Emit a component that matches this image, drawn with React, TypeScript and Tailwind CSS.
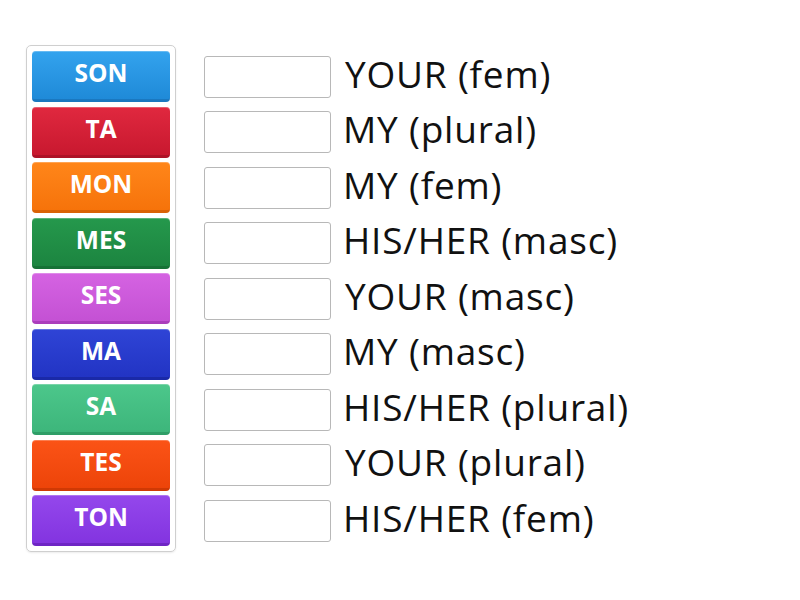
import React from "react";

const tiles = [
  { label: "SON", cls: "bg-gradient-to-b from-[#33a3ee] to-[#1f8ad8] border-b-[3px] border-[#1a78c0]" },
  { label: "TA", cls: "bg-gradient-to-b from-[#e0283f] to-[#c8182f] border-b-[3px] border-[#ad1227]" },
  { label: "MON", cls: "bg-gradient-to-b from-[#ff8619] to-[#f6730a] border-b-[3px] border-[#da6205]" },
  { label: "MES", cls: "bg-gradient-to-b from-[#25984c] to-[#1c8540] border-b-[3px] border-[#167236]" },
  { label: "SES", cls: "bg-gradient-to-b from-[#d563e2] to-[#c451d4] border-b-[3px] border-[#ab3dbc]" },
  { label: "MA", cls: "bg-gradient-to-b from-[#2f44d6] to-[#2234c4] border-b-[3px] border-[#1a29a8]" },
  { label: "SA", cls: "bg-gradient-to-b from-[#4cc78b] to-[#3db67b] border-b-[3px] border-[#2f9e67]" },
  { label: "TES", cls: "bg-gradient-to-b from-[#fb5316] to-[#ed4409] border-b-[3px] border-[#d03904]" },
  { label: "TON", cls: "bg-gradient-to-b from-[#9447ec] to-[#8334e0] border-b-[3px] border-[#6e25c4]" },
];

const prompts = [
  { text: "YOUR (fem)", cls: "ml-[14px]" },
  { text: "MY (plural)", cls: "ml-[12px]" },
  { text: "MY (fem)", cls: "ml-[12px]" },
  { text: "HIS/HER (masc)", cls: "ml-[12px]" },
  { text: "YOUR (masc)", cls: "ml-[14px]" },
  { text: "MY (masc)", cls: "ml-[12px]" },
  { text: "HIS/HER (plural)", cls: "ml-[12px]" },
  { text: "YOUR (plural)", cls: "ml-[14px]" },
  { text: "HIS/HER (fem)", cls: "ml-[12px]" },
];

export default function App() {
  return (
    <div
      className="w-[800px] h-[600px] bg-white flex items-start pl-[26px] pt-[45px]"
      style={{ fontFamily: '"Open Sans", "Noto Sans", sans-serif' }}
    >
      <div className="w-[150px] border border-[#cfcfcf] rounded-[5px] p-[5px] flex flex-col gap-[4.5px] shadow-[0_1px_2px_rgba(0,0,0,0.08)]">
        {tiles.map((t) => (
          <div
            key={t.label}
            className={`h-[51px] rounded-[4px] flex items-center justify-center pb-[3px] text-white font-bold text-[24.5px] shadow-[inset_0_1px_0_rgba(255,255,255,0.25)] ${t.cls}`}
          >
            {t.label}
          </div>
        ))}
      </div>
      <div className="ml-[28px] pt-[6px] flex flex-col gap-[4.5px]">
        {prompts.map((p) => (
          <div key={p.text} className="h-[51px] flex items-center">
            <div className="w-[127px] h-[42px] border border-[#b8b8b8] rounded-[3px] bg-white" />
            <div
              className={`${p.cls} mb-[7px] text-[37px] tracking-[0.8px] leading-none text-[#111] whitespace-nowrap`}
            >
              {p.text}
            </div>
          </div>
        ))}
      </div>
    </div>
  );
}
